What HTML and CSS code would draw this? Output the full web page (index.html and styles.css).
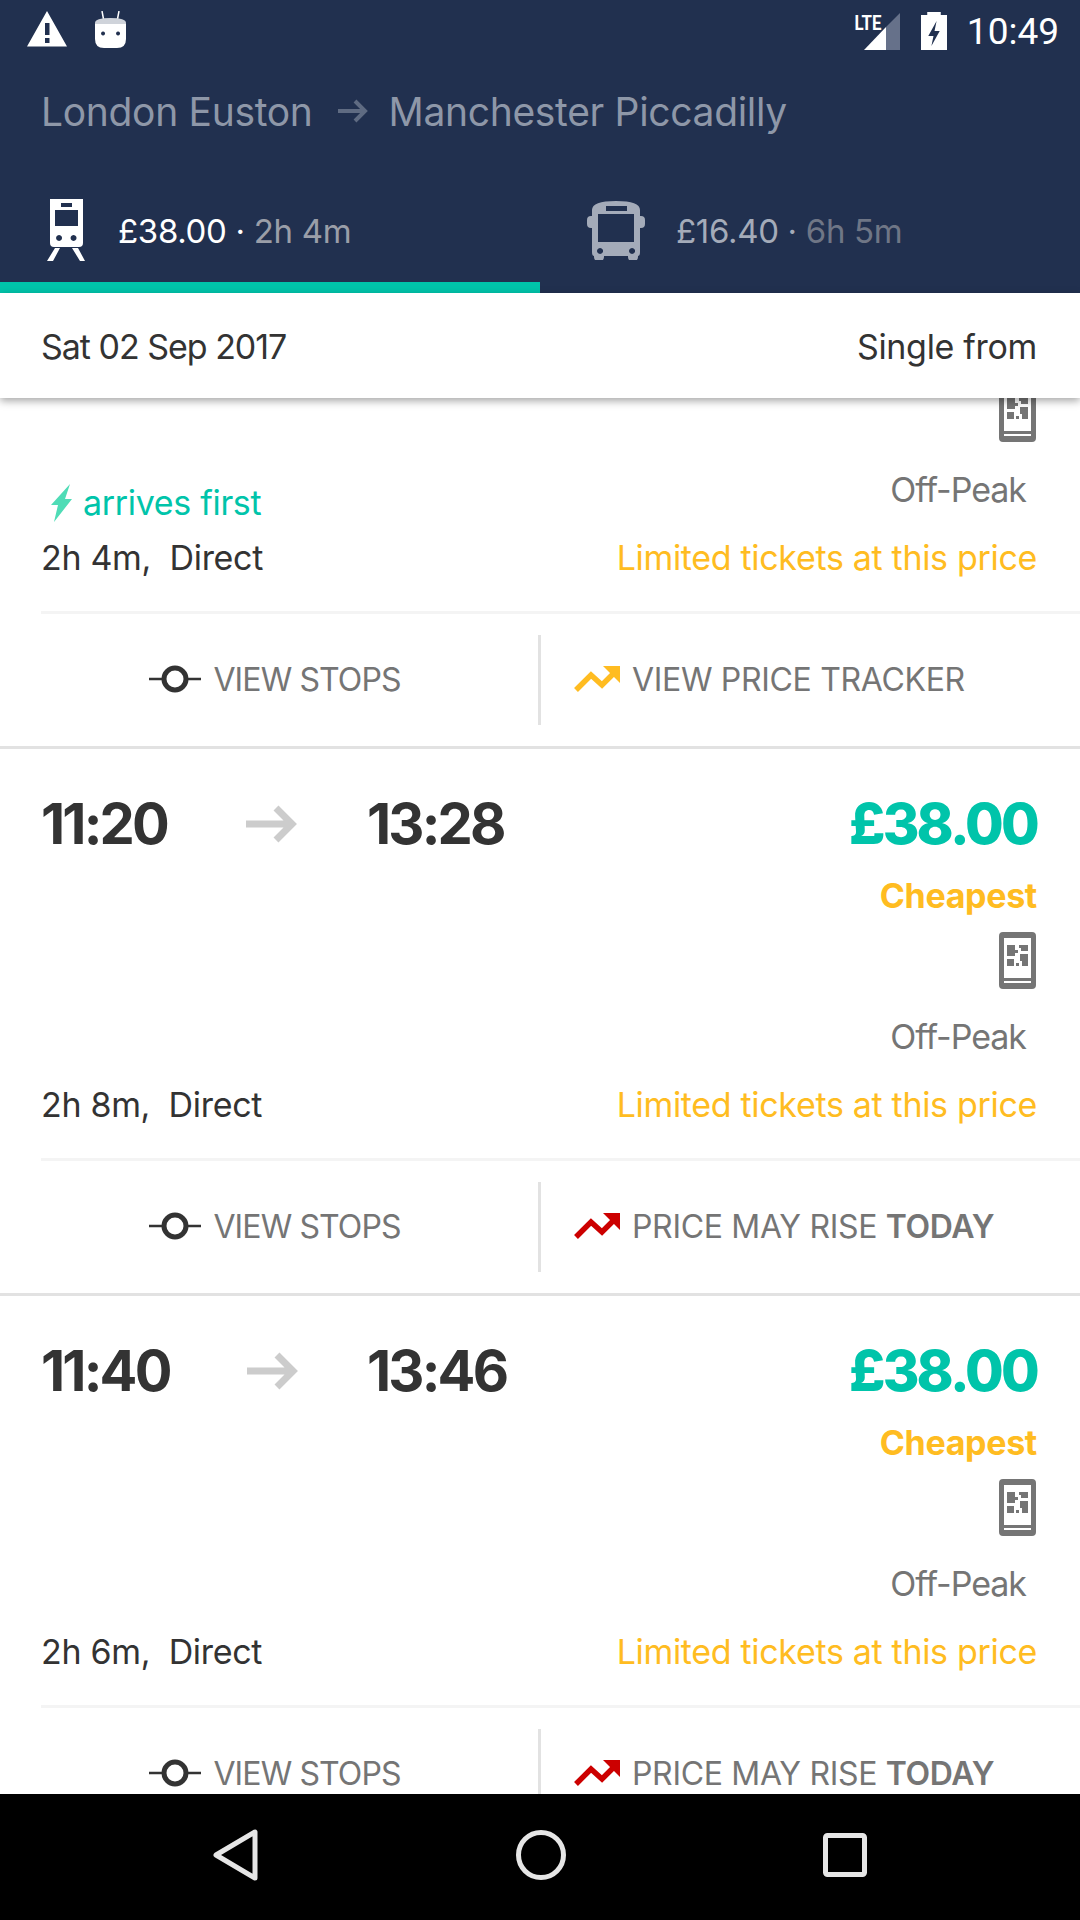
FILE: index.html
```html
<!DOCTYPE html>
<html lang="en">
<head>
  <meta charset="UTF-8" />
  <meta name="viewport" content="width=device-width, initial-scale=1.0"/>
  <title>Train times</title>
  <link rel="stylesheet" href="styles.css">
</head>
<body>
  <svg class="defs" width="0" height="0">
    <symbol id="ticket" viewBox="0 0 37 57">
      <path fill="#757575" fill-rule="evenodd" d="M4 0h29a4 4 0 0 1 4 4v49a4 4 0 0 1-4 4H4a4 4 0 0 1-4-4V4a4 4 0 0 1 4-4zM5 6v40h27V6zM5 49v2h27v-2z"/>
      <path fill="#757575" d="M8 13h8v5h3v3h-3v3H8zM20 13h9v6h-7v-3h-2zM21 22h8v12h-6v-5h-2zM8 27h7v7H8zM17 31h3v3h-3z"/>
    </symbol>
    <symbol id="stops" viewBox="0 0 52 28">
      <path fill="none" stroke="#333" stroke-width="2.5" d="M0 14h14M38 14h14"/>
      <circle cx="26" cy="14" r="11" fill="none" stroke="#333" stroke-width="5"/>
    </symbol>
    <symbol id="trend" viewBox="0 0 46 26">
      <path fill="none" stroke="currentColor" stroke-width="5.5" d="M2 24l15-15 11 10 12-12"/>
      <path fill="currentColor" d="M29 0h17v17z"/>
    </symbol>
    <symbol id="arrow" viewBox="0 0 52 38">
      <path fill="none" stroke="#ccc" stroke-width="7" d="M0 19h46M30 3l16 16-16 16"/>
    </symbol>
  </svg>

  <header class="app-header">
    <div class="status-bar">
      <div class="status-left">
        <svg width="40" height="36" viewBox="0 0 40 36">
          <path fill="#fff" fill-rule="evenodd" d="M20 0l20 35.5H0zM18 12v12h4.500V12zM18 27v5h4.500v-5z"/>
        </svg>
        <svg width="31" height="37" viewBox="0 0 31 37">
          <path fill="none" stroke="#fff" stroke-width="1.500" d="M7 0l1.500 8M24 0l-1.500 8"/>
          <path fill="#cfd3da" d="M0 12q0-5 15.500-5T31 12v2H0z"/>
          <path fill="#fff" fill-rule="evenodd" d="M0 13h31v15q0 9-9 9H9q-9 0-9-9zM8 20.500a2 2 0 1 0 .1 0zM23 20.500a2 2 0 1 0 .1 0z"/>
        </svg>
      </div>
      <div class="status-right">
        <span class="lte">LTE</span>
        <svg class="signal" width="36" height="37" viewBox="0 0 36 37">
          <path fill="#66718a" d="M36 0v37H22V14z"/>
          <path fill="#fff" d="M22 14v23H0z"/>
        </svg>
        <svg class="battery" width="26" height="38" viewBox="0 0 25 38" preserveAspectRatio="none">
          <path fill="#fff" fill-rule="evenodd" d="M6 0h13v3h6v35H0V3h6zM15 9l-8 15h5l-2 10 8-15h-5z"/>
        </svg>
        <span class="clock">10:49</span>
      </div>
    </div>

    <div class="route">
      <span>London Euston</span>
      <svg class="route-arrow" width="30" height="24" viewBox="0 0 30 24">
        <path fill="none" stroke="#5f6b82" stroke-width="4" d="M0 12h27M17 2l10 10-10 10"/>
      </svg>
      <span>Manchester Piccadilly</span>
    </div>

    <div class="tabs">
      <div class="tab active">
        <svg class="train-icon" width="38" height="62" viewBox="0 0 38 62">
          <path fill="#fff" fill-rule="evenodd" d="M3 0h33v44a4 4 0 0 1-4 4H7a4 4 0 0 1-4-4zM8 11v16h23V11zM14 4v4h11V4zM12 36a3 3 0 1 0 .1 0zM26.500 36a3 3 0 1 0 .1 0z"/>
          <path fill="#fff" d="M8 49h5l-7 13H0zM25 49h6l7 13h-5z"/>
        </svg>
        <span class="tab-price">£38.00</span><span class="tab-dot"> · </span><span class="tab-time">2h 4m</span>
      </div>
      <div class="tab">
        <svg class="bus-icon" width="58" height="59" viewBox="0 0 58 59">
          <path fill="#a4abb9" fill-rule="evenodd" d="M5 15V9q0-9 24-9t24 9v6h1q4 0 4 4v4q0 4-4 4h-1v24q0 4-2 4v1a5 5 0 0 1-10 0v-1H17v1a5 5 0 0 1-10 0v-1q-2 0-2-4V27H4q-4 0-4-4v-4q0-4 4-4zM11 13v28h36V13zM19 5v5h21V5zM13 47a3 3 0 1 0 .1 0zM45 47a3 3 0 1 0 .1 0z"/>
        </svg>
        <span class="tab-price">£16.40</span><span class="tab-dot"> · </span><span class="tab-time">6h 5m</span>
      </div>
    </div>
  </header>

  <div class="date-bar">
    <span class="date">Sat 02 Sep 2017</span>
    <span>Single from</span>
  </div>

  <main class="journeys">
    <section class="journey first">
      <div class="journey-main">
        <div class="journey-left">
          <div class="journey-info">
            <div class="arrives"><svg width="21" height="38" viewBox="0 0 21 38"><path fill="#4fdcb6" d="M19 0l-5 15h7L3 38l4-17H0z"/></svg>arrives first</div>
            <div class="duration">2h 4m,&nbsp; Direct</div>
          </div>
        </div>
        <div class="journey-right">
          <svg class="ticket"><use href="#ticket"/></svg>
          <div class="fare">Off-Peak</div>
          <div class="limited">Limited tickets at this price</div>
        </div>
      </div>
      <div class="actions">
        <div class="action stops"><svg class="stops-icon"><use href="#stops"/></svg>VIEW STOPS</div>
        <div class="action tracker"><svg class="trend amber"><use href="#trend"/></svg>VIEW PRICE TRACKER</div>
      </div>
    </section>

    <section class="journey">
      <div class="journey-main">
        <div class="journey-left">
          <div class="times">
            <div class="depart"><span class="depart-time">11:20</span><svg class="time-arrow"><use href="#arrow"/></svg></div>
            <span>13:28</span>
          </div>
          <div class="journey-info">
            <div class="duration">2h 8m,&nbsp; Direct</div>
          </div>
        </div>
        <div class="journey-right">
          <div class="price">£38.00</div>
          <div class="tag">Cheapest</div>
          <svg class="ticket"><use href="#ticket"/></svg>
          <div class="fare">Off-Peak</div>
          <div class="limited">Limited tickets at this price</div>
        </div>
      </div>
      <div class="actions">
        <div class="action stops"><svg class="stops-icon"><use href="#stops"/></svg>VIEW STOPS</div>
        <div class="action tracker"><svg class="trend red"><use href="#trend"/></svg>PRICE MAY RISE&nbsp;<b>TODAY</b></div>
      </div>
    </section>

    <section class="journey">
      <div class="journey-main">
        <div class="journey-left">
          <div class="times">
            <div class="depart"><span class="depart-time">11:40</span><svg class="time-arrow"><use href="#arrow"/></svg></div>
            <span>13:46</span>
          </div>
          <div class="journey-info">
            <div class="duration">2h 6m,&nbsp; Direct</div>
          </div>
        </div>
        <div class="journey-right">
          <div class="price">£38.00</div>
          <div class="tag">Cheapest</div>
          <svg class="ticket"><use href="#ticket"/></svg>
          <div class="fare">Off-Peak</div>
          <div class="limited">Limited tickets at this price</div>
        </div>
      </div>
      <div class="actions">
        <div class="action stops"><svg class="stops-icon"><use href="#stops"/></svg>VIEW STOPS</div>
        <div class="action tracker"><svg class="trend red"><use href="#trend"/></svg>PRICE MAY RISE&nbsp;<b>TODAY</b></div>
      </div>
    </section>
  </main>

  <nav class="nav-bar">
    <svg width="46" height="52" viewBox="0 0 46 52">
      <path fill="none" stroke="#e6e6e6" stroke-width="5" stroke-linejoin="round" d="M42 3v46L3 26z"/>
    </svg>
    <svg width="50" height="50" viewBox="0 0 50 50">
      <circle cx="25" cy="25" r="22.500" fill="none" stroke="#e6e6e6" stroke-width="5"/>
    </svg>
    <svg width="44" height="44" viewBox="0 0 44 44">
      <rect x="2.500" y="2.500" width="39" height="39" rx="2" fill="none" stroke="#e6e6e6" stroke-width="5"/>
    </svg>
  </nav>
</body>
</html>
```

FILE: styles.css
```css
* {
  box-sizing: border-box;
}

body {
  margin: 0;
  width: 1080px;
  height: 1920px;
  display: flex;
  flex-direction: column;
  overflow: hidden;
  background-color: #fff;
  font-family: 'Inter', sans-serif;
  letter-spacing: -0.02em;
  color: #333;
}

.defs {
  display: none;
}

svg {
  display: block;
  flex-shrink: 0;
}

.app-header {
  background-color: #21304f;
  height: 293px;
  display: flex;
  flex-direction: column;
}

.status-bar {
  height: 62px;
  display: flex;
  justify-content: space-between;
  padding: 11px 21px 0 27px;
}

.status-left {
  display: flex;
  gap: 28px;
  align-items: flex-start;
}

.status-right {
  display: flex;
  align-items: flex-start;
  color: #fff;
  letter-spacing: 0;
}

.lte {
  font-family: 'Roboto', sans-serif;
  font-size: 21px;
  font-weight: 700;
  line-height: 20px;
  margin-top: 2px;
  margin-right: -21px;
  transform: scaleX(0.8);
}

.signal {
  margin-top: 2px;
}

.battery {
  margin: 1px 20px 0 21px;
}

.clock {
  font-family: 'Roboto', sans-serif;
  font-size: 37px;
  line-height: 42px;
}

.route {
  height: 74px;
  padding-top: 24px;
  display: flex;
  align-items: center;
  padding-left: 41px;
  color: #8e97a8;
  font-size: 39px;
}

.route-arrow {
  margin: 0 21px 0 25px;
}

.tabs {
  flex: 1;
  display: flex;
}

.tab {
  width: 540px;
  display: flex;
  align-items: center;
  border-bottom: 11px solid transparent;
  padding: 43px 0 0 47px;
  font-size: 33px;
  color: #a4abb9;
  white-space: pre;
}

.tab.active {
  border-bottom-color: #00c4aa;
  color: #fff;
}

.train-icon {
  margin: 0 33px 2px 0;
}

.bus-icon {
  margin-right: 31px;
}

.tab-time {
  color: #9a9ea8;
}

.tab + .tab .tab-time {
  color: #6f7686;
}

.date-bar {
  height: 105px;
  position: relative;
  flex-shrink: 0;
  display: flex;
  align-items: center;
  justify-content: space-between;
  padding: 2px 43px 0 41px;
  background-color: #fff;
  font-size: 34px;
  box-shadow: 0 3px 8px rgba(0, 0, 0, 0.35);
}

.date {
  letter-spacing: -0.03em;
}

.journeys {
  flex: 1;
  min-height: 0;
  overflow: hidden;
}

.journey {
  height: 547px;
  border-bottom: 3px solid #e2e2e2;
}

.journey.first {
  height: 351px;
}

.journey-main {
  height: 412px;
  margin-left: 41px;
  padding: 41px 43px 33px 0;
  display: flex;
  justify-content: space-between;
  border-bottom: 3px solid #f4f4f4;
}

.first .journey-main {
  height: 216px;
  padding-top: 0;
}

.first .journey-left {
  justify-content: flex-end;
}

.first .ticket {
  margin-top: -13px;
}

.journey-left {
  display: flex;
  flex-direction: column;
  justify-content: space-between;
}

.times {
  display: flex;
  font-size: 56px;
  font-weight: 700;
  line-height: 68px;
  letter-spacing: -0.05em;
}

.depart {
  width: 326px;
  display: flex;
  align-items: center;
}

.depart-time {
  padding-right: 10px;
}

.time-arrow {
  width: 52px;
  height: 38px;
  margin: 0 auto;
}

.journey-info {
  font-size: 34px;
  line-height: 40px;
}

.arrives {
  display: flex;
  align-items: center;
  gap: 11px;
  padding-left: 10px;
  margin-bottom: 15px;
  color: #00c4aa;
}

.journey-right {
  display: flex;
  flex-direction: column;
  align-items: flex-end;
}

.price {
  font-size: 56px;
  font-weight: 800;
  line-height: 68px;
  letter-spacing: -0.05em;
  color: #00c4aa;
}

.tag {
  margin-top: 16px;
  font-size: 34px;
  font-weight: 700;
  line-height: 44px;
  color: #ffbc21;
}

.ticket {
  width: 37px;
  height: 57px;
  margin: 14px 1px 0 0;
}

.fare {
  margin: 28px 11px 0 0;
  font-size: 34px;
  line-height: 40px;
  letter-spacing: -0.03em;
  color: #757575;
}

.limited {
  margin-top: 28px;
  font-size: 34px;
  line-height: 40px;
  color: #ffbc21;
}

.actions {
  height: 132px;
  display: flex;
  align-items: center;
  font-size: 32px;
  color: #757575;
}

.action {
  height: 90px;
  padding-bottom: 2px;
  display: flex;
  align-items: center;
}

.action b {
  font-weight: 600;
}

.stops {
  width: 541px;
  justify-content: center;
  padding-left: 12px;
  border-right: 3px solid #e2e2e2;
  letter-spacing: -0.028em;
}

.stops-icon {
  width: 52px;
  height: 28px;
  margin-right: 12px;
}

.tracker {
  padding-left: 33px;
}

.trend {
  width: 46px;
  height: 26px;
  margin-right: 12px;
}

.amber {
  color: #ffbc21;
}

.red {
  color: #cc0000;
}

.nav-bar {
  height: 126px;
  flex-shrink: 0;
  background-color: #000;
  display: flex;
  align-items: center;
  gap: 257px;
  padding: 0 0 4px 213px;
}
```
